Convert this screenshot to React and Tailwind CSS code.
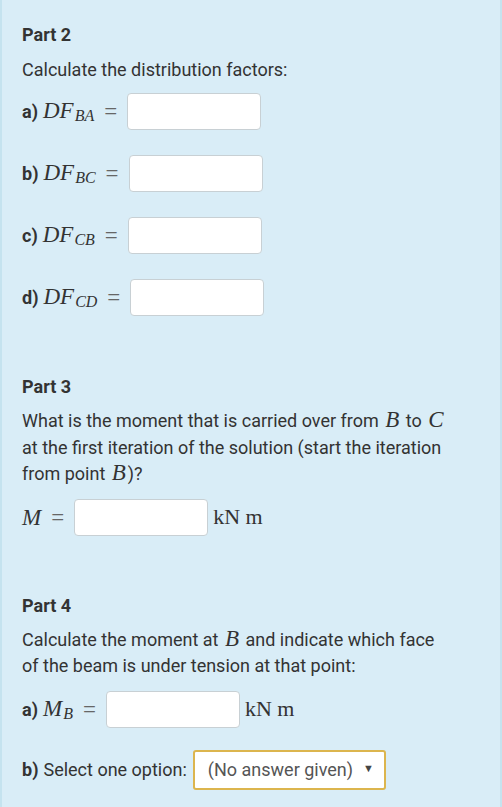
import React from 'react';

const serif = { fontFamily: '"Liberation Serif", "DejaVu Serif", serif' };

const Sym = ({ base, sub, inline }) => (
  <span
    className={`italic text-[23px] leading-none text-[#333] ${inline ? 'mx-[2px]' : ''}`}
    style={serif}
  >
    {base}
    {sub && <span className="text-[16px] leading-none align-[-3px] ml-[1px]">{sub}</span>}
  </span>
);

const Eq = () => (
  <span className="text-[23px] leading-none text-[#666] mx-[10px]" style={serif}>=</span>
);

const Box = () => (
  <div className="w-[134px] h-[37px] bg-white border border-[#c8d0d4] rounded-[4px]" />
);

const Unit = () => (
  <span className="text-[22px] leading-none text-[#333] ml-[5px]" style={serif}>kN m</span>
);

const DfRow = ({ label, sub }) => (
  <div className="flex items-center h-[37px]">
    <span className="font-bold mr-[5px]">{label}</span>
    <Sym base="DF" sub={sub} />
    <Eq />
    <Box />
  </div>
);

export default function App() {
  return (
    <div
      className="min-h-[807px] w-full bg-[#d9edf7] border-x-2 border-[#c5e3ef] pl-5 pr-[48px] pt-[23px] text-[18px] text-[#333]"
      style={{ fontFamily: 'Roboto, "Noto Sans", sans-serif' }}
    >
      {/* Part 2 */}
      <h3 className="font-bold text-[18px] leading-[24px]">Part 2</h3>
      <p className="leading-[26px] mt-[10px]">Calculate the distribution factors:</p>
      <div className="flex flex-col gap-[25px] mt-[10px]">
        <DfRow label="a)" sub="BA" />
        <DfRow label="b)" sub="BC" />
        <DfRow label="c)" sub="CB" />
        <DfRow label="d)" sub="CD" />
      </div>

      {/* Part 3 */}
      <h3 className="font-bold text-[18px] leading-[24px] mt-[59px]">Part 3</h3>
      <p className="leading-[26.5px] mt-[9px]">
        What is the moment that is carried over from <Sym base="B" inline /> to <Sym base="C" inline /> at
        the first iteration of the solution (start the iteration from point <Sym base="B" inline />)?
      </p>
      <div className="flex items-center mt-[11px]">
        <Sym base="M" />
        <Eq />
        <Box />
        <Unit />
      </div>

      {/* Part 4 */}
      <h3 className="font-bold text-[18px] leading-[24px] mt-[58px]">Part 4</h3>
      <p className="leading-[26.5px] mt-[9px]">
        Calculate the moment at <Sym base="B" inline /> and indicate which face of the beam is under
        tension at that point:
      </p>
      <div className="flex items-center mt-[11px]">
        <span className="font-bold mr-[5px]">a)</span>
        <Sym base="M" sub="B" />
        <Eq />
        <Box />
        <Unit />
      </div>
      <div className="flex items-center mt-[22px]">
        <span className="font-bold">b)</span>
        <span className="ml-[5px]">Select one option:</span>
        <div className="ml-[6px] w-[193px] h-[40px] bg-white border-2 border-[#dcb54e] rounded-[3px] flex items-center justify-between pl-[13px] pr-[10px] text-[#555]">
          <span>(No answer given)</span>
          <span className="text-[11px] text-[#444]">▼</span>
        </div>
      </div>
    </div>
  );
}
